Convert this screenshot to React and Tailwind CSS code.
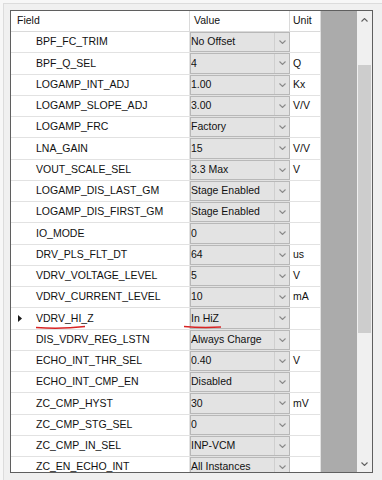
import React from 'react';

// register rows shown in the grid
const rows = [
  ['BPF_FC_TRIM', 'No Offset', ''],
  ['BPF_Q_SEL', '4', 'Q'],
  ['LOGAMP_INT_ADJ', '1.00', 'Kx'],
  ['LOGAMP_SLOPE_ADJ', '3.00', 'V/V'],
  ['LOGAMP_FRC', 'Factory', ''],
  ['LNA_GAIN', '15', 'V/V'],
  ['VOUT_SCALE_SEL', '3.3 Max', 'V'],
  ['LOGAMP_DIS_LAST_GM', 'Stage Enabled', ''],
  ['LOGAMP_DIS_FIRST_GM', 'Stage Enabled', ''],
  ['IO_MODE', '0', ''],
  ['DRV_PLS_FLT_DT', '64', 'us'],
  ['VDRV_VOLTAGE_LEVEL', '5', 'V'],
  ['VDRV_CURRENT_LEVEL', '10', 'mA'],
  ['VDRV_HI_Z', 'In HiZ', '', true],
  ['DIS_VDRV_REG_LSTN', 'Always Charge', ''],
  ['ECHO_INT_THR_SEL', '0.40', 'V'],
  ['ECHO_INT_CMP_EN', 'Disabled', ''],
  ['ZC_CMP_HYST', '30', 'mV'],
  ['ZC_CMP_STG_SEL', '0', ''],
  ['ZC_CMP_IN_SEL', 'INP-VCM', ''],
  ['ZC_EN_ECHO_INT', 'All Instances', ''],
];

function Chevron({ up = false, className = '' }) {
  return (
    <svg width="7" height="4" viewBox="0 0 7 4" className={className}>
      <path
        d={up ? 'M0.5 3.5 L3.5 0.5 L6.5 3.5' : 'M0.5 0.5 L3.5 3.5 L6.5 0.5'}
        fill="none"
        stroke="currentColor"
        strokeWidth="1.1"
      />
    </svg>
  );
}

function Row({ field, value, unit, current }) {
  return (
    <div className="flex h-[21.25px] shrink-0">
      <div className="flex items-center w-[179px] bg-white border-r border-b border-[#e2e2e2]">
        <div className="w-[25px] flex items-center pl-[7px]">
          {current && (
            <svg width="4" height="7" viewBox="0 0 4 7">
              <polygon points="0,0 4,3.5 0,7" fill="#1a1a1a" />
            </svg>
          )}
        </div>
        <span className="whitespace-nowrap">{field}</span>
      </div>
      <div className="w-[100px] bg-white border-b border-[#e2e2e2] flex">
        <div className="flex flex-1 border border-[#b8b8b8] bg-[#e3e3e3]">
          <div className="flex-1 flex items-center whitespace-nowrap overflow-hidden">{value}</div>
          <div className="w-[15px] flex items-center justify-center border-l border-[#cfcfcf] text-[#8a8a8a]">
            <Chevron />
          </div>
        </div>
      </div>
      <div className="w-[31px] bg-white border-r border-b border-[#e2e2e2] flex items-center pl-[3px] whitespace-nowrap">
        {unit}
      </div>
    </div>
  );
}

export default function App() {
  return (
    <div className="relative w-[382px] h-[480px] overflow-hidden bg-[#f7f7f7] font-['Liberation_Sans',Arial,sans-serif] text-[10.5px] text-[#111]">
      <div className="ml-[3px] mt-[3px] h-[477px] border-l border-t border-[#dcdcdc] bg-[#f0f0f0] pl-[6px] pt-[6px]">
        <div className="w-[363px] h-[463px] border border-[#5f5f5f] flex overflow-hidden">
          <div className="w-[346px] flex flex-col bg-[#ababab] overflow-hidden">
            <div className="flex h-[21px] shrink-0">
              <div className="w-[179px] bg-white border-r border-b border-[#dadada] flex items-center pl-[6px]">Field</div>
              <div className="w-[100px] bg-white border-r border-b border-[#dadada] flex items-center pl-[4px]">Value</div>
              <div className="w-[31px] bg-white border-r border-b border-[#dadada] flex items-center pl-[3px]">Unit</div>
            </div>
            {rows.map(([field, value, unit, current]) => (
              <Row key={field} field={field} value={value} unit={unit} current={current} />
            ))}
          </div>
          <div className="w-[15px] flex flex-col bg-[#f0f0f0]">
            <div className="h-[17px] flex items-center justify-center text-[#606060]">
              <Chevron up />
            </div>
            <div className="h-[37px]" />
            <div className="h-[268px] mx-[1px] bg-[#cdcdcd]" />
            <div className="flex-1" />
            <div className="h-[17px] flex items-center justify-center text-[#606060]">
              <Chevron />
            </div>
          </div>
        </div>
      </div>
      <svg className="absolute inset-0 pointer-events-none" width="382" height="480">
        <path d="M36 327.5 Q60 329.5 85 326.5" fill="none" stroke="#d82424" strokeWidth="1.5" />
        <path d="M184 326.5 Q202 328 221 327" fill="none" stroke="#d82424" strokeWidth="1.5" />
      </svg>
    </div>
  );
}
